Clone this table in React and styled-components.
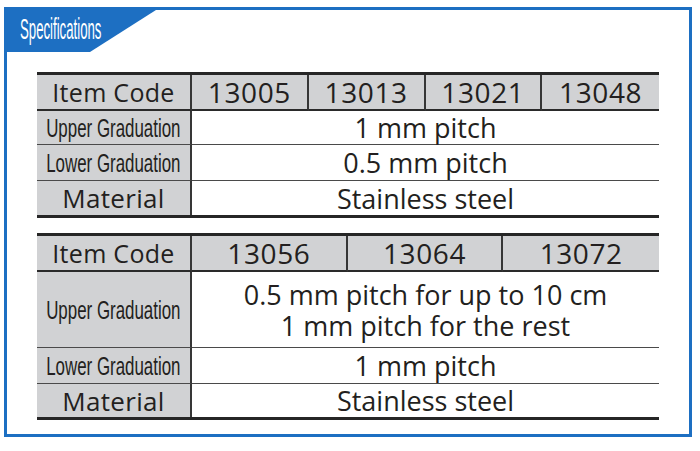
import React from "react"
import styled, { createGlobalStyle } from "styled-components"

const GlobalStyle = createGlobalStyle`
  html, body {
    margin: 0;
    padding: 0;
    background: #fff;
  }
  body {
    width: 700px;
    height: 451px;
    overflow: hidden;
    font-family: "Open Sans", "Noto Sans", sans-serif;
    color: #231f20;
  }
`

const BLUE = "#1d6fc2"
const GRAY = "#d1d2d4"

const Page = styled.div`
  padding: 7px 0 0 4px;
`

const Frame = styled.section`
  box-sizing: border-box;
  width: 688px;
  height: 430px;
  border: 3px solid ${BLUE};
`

const Tab = styled.div`
  box-sizing: border-box;
  width: 149px;
  height: 42px;
  padding: 0 0 4px 13px;
  background: ${BLUE};
  clip-path: polygon(0 0, 100% 0, 83px 100%, 0 100%);
  display: flex;
  align-items: center;
`

const TabTitle = styled.span`
  display: inline-block;
  font-family: "Liberation Sans", Arial, sans-serif;
  font-size: 30px;
  line-height: 1;
  color: #fff;
  white-space: nowrap;
  transform: scaleX(0.44);
  transform-origin: left center;
`

const Content = styled.div`
  display: flex;
  flex-direction: column;
  gap: 15px;
  padding: 20px 0 0 30px;
`

const SpecTable = styled.div`
  display: grid;
  width: 622px;
  grid-template-columns: 155px repeat(${p => p.$cols}, 1fr);
  grid-template-rows: ${p => p.$rows};
  border-top: 3px solid #262626;
  border-bottom: 3px solid #262626;
`

const Cell = styled.div`
  box-sizing: border-box;
  display: flex;
  align-items: center;
  justify-content: center;
  white-space: nowrap;
  min-width: 0;
`

const LabelCell = styled(Cell)`
  background: ${GRAY};
  border-right: 2px solid #363636;
  border-bottom: ${p => (p.$head ? "2px solid #2a2a2a" : p.$last ? "none" : "1.5px solid #4a4a4a")};
`

const CodeCell = styled(Cell)`
  background: ${GRAY};
  border-right: ${p => (p.$end ? "none" : "2px solid #363636")};
  border-bottom: 2px solid #2a2a2a;
  font-size: 28px;
  letter-spacing: 0.6px;
`

const ValueCell = styled(Cell)`
  grid-column: span ${p => p.$cols};
  flex-direction: column;
  font-size: 27px;
  line-height: 31px;
  border-bottom: ${p => (p.$last ? "none" : "1.5px solid #4a4a4a")};
`

const WideLabel = styled.span`
  font-size: ${p => p.$size || 25}px;
  letter-spacing: 0.3px;
`

const NarrowLabel = styled.span`
  display: inline-block;
  font-family: "Liberation Sans", Arial, sans-serif;
  font-size: 26px;
  line-height: 1;
  transform: scaleX(0.65);
  transform-origin: center;
`

const tables = [
  {
    codes: ["13005", "13013", "13021", "13048"],
    rows: "36px 34px 36px 34px",
    upper: ["1 mm pitch"],
    lower: "0.5 mm pitch",
  },
  {
    codes: ["13056", "13064", "13072"],
    rows: "36px 76px 36px 33px",
    upper: ["0.5 mm pitch for up to 10 cm", "1 mm pitch for the rest"],
    lower: "1 mm pitch",
  },
]

const Spec = ({ codes, rows, upper, lower }) => {
  const cols = codes.length
  return (
    <SpecTable $cols={cols} $rows={rows}>
      <LabelCell $head>
        <WideLabel>Item Code</WideLabel>
      </LabelCell>
      {codes.map((c, i) => (
        <CodeCell key={c} $end={i === cols - 1}>{c}</CodeCell>
      ))}

      <LabelCell>
        <NarrowLabel>Upper Graduation</NarrowLabel>
      </LabelCell>
      <ValueCell $cols={cols}>
        {upper.map(line => <span key={line}>{line}</span>)}
      </ValueCell>

      <LabelCell>
        <NarrowLabel>Lower Graduation</NarrowLabel>
      </LabelCell>
      <ValueCell $cols={cols}>{lower}</ValueCell>

      <LabelCell $last>
        <WideLabel $size={26}>Material</WideLabel>
      </LabelCell>
      <ValueCell $cols={cols} $last>Stainless steel</ValueCell>
    </SpecTable>
  )
}

const App = () => {
  return (
    <>
      <GlobalStyle />
      <Page>
        <Frame>
          <Tab>
            <TabTitle>Specifications</TabTitle>
          </Tab>
          <Content>
            {tables.map(t => (
              <Spec key={t.codes[0]} {...t} />
            ))}
          </Content>
        </Frame>
      </Page>
    </>
  )
}

export default App
